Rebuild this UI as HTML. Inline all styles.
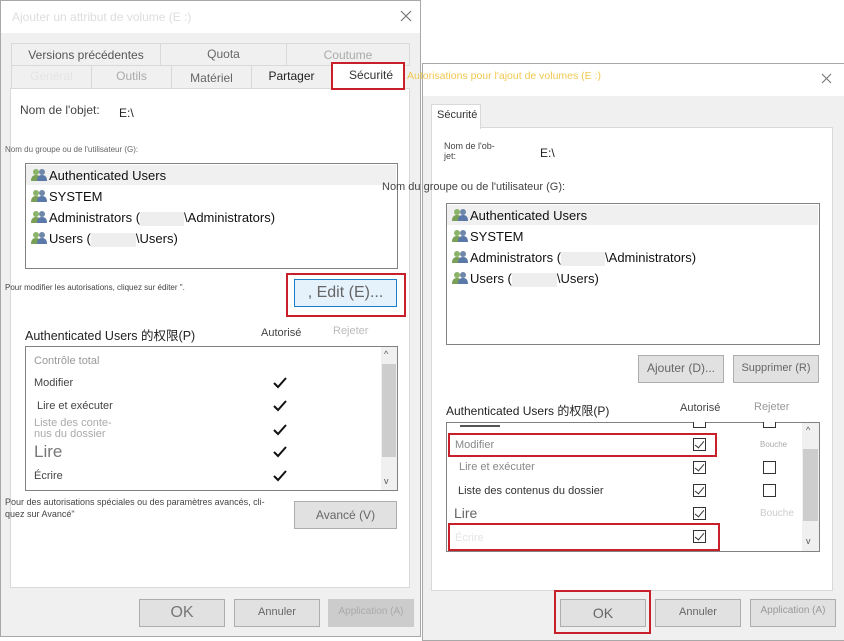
<!DOCTYPE html>
<html><head><meta charset="utf-8"><style>
*{margin:0;padding:0;box-sizing:border-box}
body{width:844px;height:639px;background:#fff;position:relative;overflow:hidden;font-family:"Liberation Sans","Noto Sans CJK SC",sans-serif;color:#222}
.a{position:absolute;white-space:nowrap}
.dlg{position:absolute;background:#f0f0f0;border:1px solid #a8a8a8}
.w{position:absolute;background:#fff}
.box{position:absolute;background:#fff;border:1px solid #828282}
.btn{position:absolute;background:#e1e1e1;border:1px solid #adadad;text-align:center;color:#666;font-size:12px}
.red{position:absolute;border:2px solid #c8202a}
.tab{position:absolute;border:1px solid #d9d9d9;background:#f0f0f0;text-align:center;font-size:12px;color:#666}
.cb{position:absolute;width:13px;height:13px;border:1px solid #333;background:#fff}
.cb.c::after{content:"";position:absolute;left:3px;top:0px;width:4px;height:8px;border:solid #333;border-width:0 1.3px 1.3px 0;transform:rotate(40deg)}
.ico{position:absolute;width:17px;height:14px}
.ck{position:absolute;width:16px;height:14px}
</style></head><body>
<!-- left dialog -->
<div class="dlg" style="left:0;top:0;width:421px;height:637px"></div>
<div class="w" style="left:1px;top:1px;width:419px;height:32px"></div>
<div class="a" style="left:12px;top:10px;font-size:12px;color:#ddd">Ajouter un attribut de volume (E :)</div>
<svg class="a" style="left:400px;top:10px" width="12" height="12"><path d="M1 1L11 11M11 1L1 11" stroke="#777" stroke-width="1.2"/></svg>
<div class="tab" style="left:11px;top:43px;width:150px;height:23px;line-height:22px;font-size:12px;color:#555">Versions précédentes</div>
<div class="tab" style="left:160px;top:43px;width:127px;height:23px;line-height:20px;color:#666">Quota</div>
<div class="tab" style="left:286px;top:43px;width:124px;height:23px;line-height:22px;color:#aaa">Coutume</div>
<div class="tab" style="left:11px;top:65px;width:81px;height:24px;line-height:20px;color:#e4e4e4">Général</div>
<div class="tab" style="left:91px;top:65px;width:81px;height:24px;line-height:20px;color:#aaa">Outils</div>
<div class="tab" style="left:171px;top:65px;width:81px;height:24px;line-height:24px;color:#666">Matériel</div>
<div class="tab" style="left:251px;top:65px;width:81px;height:24px;line-height:20px;color:#222">Partager</div>
<div class="w" style="left:10px;top:88px;width:400px;height:500px;border:1px solid #d9d9d9"></div>
<div class="w" style="left:333px;top:64px;width:70px;height:26px"></div>
<div class="a" style="left:349px;top:68px;font-size:12px;color:#333">Sécurité</div>
<div class="red" style="left:331px;top:62px;width:74px;height:28px"></div>
<div class="a" style="left:20px;top:103px;font-size:12px;color:#444">Nom de l'objet:</div>
<div class="a" style="left:119px;top:106px;font-size:12px">E:\</div>
<div class="a" style="left:5px;top:145px;font-size:8px;color:#666">Nom du groupe ou de l'utilisateur (G):</div>
<div class="box" style="left:25px;top:163px;width:373px;height:106px"></div>
<div class="a" style="left:26px;top:165px;width:370px;height:20px;background:#f0f0f0"></div>
<div class="a" style="left:5px;top:283px;font-size:8px;color:#444">Pour modifier les autorisations, cliquez sur éditer ".</div>
<div class="red" style="left:286px;top:273px;width:120px;height:44px"></div>
<div class="btn" style="left:294px;top:279px;width:103px;height:28px;background:#e5f1fb;border-color:#1c7dc8;font-size:16px;line-height:26px;color:#666">, Edit (E)...</div>
<div class="a" style="left:25px;top:325px;font-size:12.5px;color:#222">Authenticated Users 的权限(P)</div>
<div class="a" style="left:261px;top:327px;font-size:11px;color:#444">Autorisé</div>
<div class="a" style="left:333px;top:325px;font-size:11px;color:#bbb">Rejeter</div>
<div class="box" style="left:25px;top:346px;width:373px;height:145px"></div>
<div class="a" style="left:381px;top:347px;width:16px;height:143px;background:#f0f0f0"></div>
<div class="a" style="left:382px;top:364px;width:14px;height:93px;background:#cdcdcd"></div>
<div class="a" style="left:384px;top:349px;font-size:9px;color:#555">^</div>
<div class="a" style="left:384px;top:476px;font-size:9px;color:#555">v</div>
<div class="a" style="left:34px;top:355px;font-size:11px;color:#999">Contrôle total</div>
<div class="a" style="left:34px;top:377px;font-size:11px;color:#444">Modifier</div>
<div class="a" style="left:37px;top:400px;font-size:11px;color:#444">Lire et exécuter</div>
<div class="a" style="left:34px;top:418px;font-size:11px;color:#aaa;line-height:11px">Liste des conte-<br>nus du dossier</div>
<div class="a" style="left:34px;top:442px;font-size:17px;color:#777">Lire</div>
<div class="a" style="left:34px;top:470px;font-size:11px;color:#444">Écrire</div>
<svg class="ck" style="left:272px;top:376px"><path d="M2 7L6 11L14 2" stroke="#111" stroke-width="2" fill="none"/></svg>
<svg class="ck" style="left:272px;top:399px"><path d="M2 7L6 11L14 2" stroke="#111" stroke-width="2" fill="none"/></svg>
<svg class="ck" style="left:272px;top:423px"><path d="M2 7L6 11L14 2" stroke="#111" stroke-width="2" fill="none"/></svg>
<svg class="ck" style="left:272px;top:445px"><path d="M2 7L6 11L14 2" stroke="#111" stroke-width="2" fill="none"/></svg>
<svg class="ck" style="left:272px;top:469px"><path d="M2 7L6 11L14 2" stroke="#111" stroke-width="2" fill="none"/></svg>
<div class="a" style="left:5px;top:496px;font-size:9px;color:#444;line-height:12px">Pour des autorisations spéciales ou des paramètres avancés, cli-<br>quez sur Avancé"</div>
<div class="btn" style="left:294px;top:501px;width:103px;height:28px;line-height:26px">Avancé (V)</div>
<div class="btn" style="left:139px;top:599px;width:86px;height:28px;line-height:26px;font-size:16px;color:#777">OK</div>
<div class="btn" style="left:234px;top:599px;width:86px;height:28px;line-height:24px;font-size:11px">Annuler</div>
<div class="btn" style="left:328px;top:599px;width:86px;height:28px;line-height:24px;font-size:10px;background:#ccc;color:#aaa;border-color:#ccc">Application (A)</div>

<!-- right dialog -->
<div class="dlg" style="left:422px;top:63px;width:423px;height:578px"></div>
<div class="w" style="left:423px;top:64px;width:421px;height:32px"></div>
<div class="a" style="left:407px;top:70px;font-size:10.5px;color:#f0c850">Autorisations pour l'ajout de volumes (E :)</div>
<svg class="a" style="left:821px;top:73px" width="11" height="11"><path d="M1 1L10 10M10 1L1 10" stroke="#777" stroke-width="1.1"/></svg>
<div class="w" style="left:431px;top:127px;width:402px;height:464px;border:1px solid #d9d9d9"></div>
<div class="w" style="left:431px;top:104px;width:50px;height:25px;border:1px solid #d9d9d9;border-bottom:none"></div>
<div class="a" style="left:437px;top:109px;font-size:11px;color:#333">Sécurité</div>
<div class="a" style="left:444px;top:141px;font-size:9px;color:#444;line-height:10px">Nom de l'ob-<br>jet:</div>
<div class="a" style="left:540px;top:146px;font-size:12px">E:\</div>
<div class="a" style="left:382px;top:181px;font-size:11px;color:#444">Nom du groupe ou de l'utilisateur (G):</div>
<div class="box" style="left:446px;top:203px;width:374px;height:142px"></div>
<div class="a" style="left:447px;top:205px;width:371px;height:20px;background:#f0f0f0"></div>
<div class="btn" style="left:638px;top:355px;width:86px;height:28px;line-height:24px">Ajouter (D)...</div>
<div class="btn" style="left:733px;top:355px;width:86px;height:28px;line-height:24px;font-size:11px">Supprimer (R)</div>
<div class="a" style="left:446px;top:402px;font-size:12px;color:#222">Authenticated Users 的权限(P)</div>
<div class="a" style="left:680px;top:402px;font-size:11px;color:#444">Autorisé</div>
<div class="a" style="left:754px;top:401px;font-size:11px;color:#999">Rejeter</div>
<div class="box" style="left:446px;top:422px;width:374px;height:130px"></div>
<div class="a" style="left:802px;top:423px;width:17px;height:128px;background:#f0f0f0"></div>
<div class="a" style="left:803px;top:449px;width:15px;height:72px;background:#cdcdcd"></div>
<div class="a" style="left:806px;top:425px;font-size:9px;color:#555">^</div>
<div class="a" style="left:806px;top:536px;font-size:9px;color:#555">v</div>
<div class="a" style="left:460px;top:423px;width:40px;height:4px;border-bottom:2px solid #555"></div>
<div class="cb" style="left:693px;top:422px;height:6px;border-top:none"></div>
<div class="cb" style="left:763px;top:422px;height:6px;border-top:none"></div>
<div class="a" style="left:455px;top:439px;font-size:11px;color:#888">Modifier</div>
<div class="a" style="left:459px;top:461px;font-size:11px;color:#888">Lire et exécuter</div>
<div class="a" style="left:458px;top:485px;font-size:11px;color:#333">Liste des contenus du dossier</div>
<div class="a" style="left:454px;top:505px;font-size:14px;color:#666">Lire</div>
<div class="a" style="left:455px;top:532px;font-size:11px;color:#e4e4e4">Écrire</div>
<div class="cb c" style="left:693px;top:438px"></div>
<div class="cb c" style="left:693px;top:461px"></div>
<div class="cb c" style="left:693px;top:484px"></div>
<div class="cb c" style="left:693px;top:507px"></div>
<div class="cb c" style="left:693px;top:530px"></div>
<div class="cb" style="left:763px;top:461px"></div>
<div class="cb" style="left:763px;top:484px"></div>
<div class="a" style="left:760px;top:440px;font-size:8px;color:#aaa">Bouche</div>
<div class="a" style="left:760px;top:508px;font-size:10px;color:#ccc">Bouche</div>
<div class="red" style="left:448px;top:433px;width:269px;height:24px"></div>
<div class="red" style="left:448px;top:523px;width:272px;height:28px"></div>
<div class="red" style="left:554px;top:590px;width:97px;height:44px"></div>
<div class="btn" style="left:560px;top:599px;width:86px;height:28px;line-height:26px;font-size:14px">OK</div>
<div class="btn" style="left:655px;top:599px;width:86px;height:28px;line-height:24px;font-size:11px">Annuler</div>
<div class="btn" style="left:750px;top:599px;width:86px;height:28px;line-height:22px;font-size:10px;color:#999">Application (A)</div>

<!-- user list rows -->
<svg width="0" height="0" style="position:absolute"><defs>
<g id="u"><circle cx="5" cy="4" r="3" fill="#8bb36a"/><path d="M0 13 Q0 7 5 7 Q10 7 10 13Z" fill="#7aa058"/><circle cx="11" cy="4" r="3" fill="#6f87a8"/><path d="M6 13 Q6 7 11 7 Q16 7 16 13Z" fill="#5b79a8"/></g></defs></svg>
<svg class="ico" style="left:31px;top:168px"><use href="#u"/></svg>
<svg class="ico" style="left:31px;top:189px"><use href="#u"/></svg>
<svg class="ico" style="left:31px;top:210px"><use href="#u"/></svg>
<svg class="ico" style="left:31px;top:231px"><use href="#u"/></svg>
<div class="a" style="left:49px;top:165px;font-size:13px;line-height:21px;color:#111">Authenticated Users<br>SYSTEM<br>Administrators (<span style="display:inline-block;width:44px;height:14px;background:#eee;vertical-align:middle"></span>\Administrators)<br>Users (<span style="display:inline-block;width:45px;height:14px;background:#eee;vertical-align:middle"></span>\Users)</div>
<svg class="ico" style="left:452px;top:208px"><use href="#u"/></svg>
<svg class="ico" style="left:452px;top:229px"><use href="#u"/></svg>
<svg class="ico" style="left:452px;top:250px"><use href="#u"/></svg>
<svg class="ico" style="left:452px;top:271px"><use href="#u"/></svg>
<div class="a" style="left:470px;top:205px;font-size:13px;line-height:21px;color:#111">Authenticated Users<br>SYSTEM<br>Administrators (<span style="display:inline-block;width:44px;height:14px;background:#eee;vertical-align:middle"></span>\Administrators)<br>Users (<span style="display:inline-block;width:45px;height:14px;background:#eee;vertical-align:middle"></span>\Users)</div>
</body></html>
